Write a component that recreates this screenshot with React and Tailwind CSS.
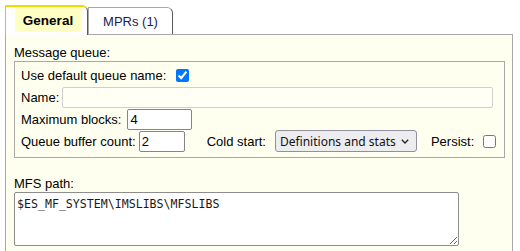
export default function App() {
  return (
    <div className="w-[520px] h-[251px] bg-white overflow-hidden text-[13px] text-black font-['Liberation_Sans',Arial,sans-serif]">
      {/* Tabs */}
      <div className="flex items-end h-[34px] pl-[5px]">
        <div className="relative z-10 -mb-px h-[30px] w-[83px] bg-white border-l border-l-[#b4b4b4] border-t-2 border-t-[#f0da00] border-r border-r-[#5a5a5a] rounded-tr-[6px] pt-px pl-[9px]">
          <div className="w-[66px] h-[24px] bg-[#ffffc4] flex items-center justify-center font-bold text-[13.5px] leading-[15px]">
            General
          </div>
        </div>
        <div className="h-[27px] w-[85px] bg-white border-l border-t border-l-[#a8a8a8] border-t-[#a8a8a8] border-r border-r-[#5a5a5a] rounded-tr-[6px] flex items-center justify-center text-[#1c1c50] leading-[15px]">
          MPRs (1)
        </div>
      </div>

      {/* Panel */}
      <div className="ml-[5px] w-[508px] h-[230px] border border-[#a8a8a8] bg-[#fffff0] pl-[8px] pt-[10px]">
        <div className="leading-[15px]">Message queue:</div>
        <div className="mt-[1px] w-[491px] border border-[#a8a8a8] pl-[6px] pt-[2px] pb-[5px]">
          <div className="h-[22px] flex items-center leading-[15px]">
            <span>Use default queue name:</span>
            <input
              type="checkbox"
              defaultChecked
              className="ml-[10px] m-0 w-[13px] h-[13px] accent-[#0075ff]"
            />
          </div>
          <div className="h-[22px] flex items-center leading-[15px]">
            <span>Name:</span>
            <input
              type="text"
              readOnly
              defaultValue=""
              className="ml-[3px] w-[431px] h-[21px] border border-[#cfcfcf] rounded-[2px] bg-[#fffff6] px-[2px] text-[13px]"
            />
          </div>
          <div className="h-[22px] flex items-center leading-[15px]">
            <span>Maximum blocks:</span>
            <input
              type="text"
              readOnly
              defaultValue="4"
              className="ml-[6px] w-[65px] h-[21px] border border-[#858585] rounded-[2px] bg-white px-[2px] text-[13px]"
            />
          </div>
          <div className="h-[22px] flex items-center leading-[15px]">
            <span>Queue buffer count:</span>
            <input
              type="text"
              readOnly
              defaultValue="2"
              className="ml-[3px] w-[46px] h-[21px] border border-[#858585] rounded-[2px] bg-white px-[2px] text-[13px]"
            />
            <span className="ml-[22px]">Cold start:</span>
            <div className="ml-[9px] w-[142px] h-[22px] border border-[#8f8f9d] rounded-[3px] bg-[#ededf0] flex items-center justify-between pl-[4px] pr-[7px] font-['Noto_Sans',sans-serif] text-[12px] text-[#111]">
              <span>Definitions and stats</span>
              <svg width="8" height="5" viewBox="0 0 8 5" className="shrink-0">
                <path d="M0.8 0.8 L4 4 L7.2 0.8" fill="none" stroke="#222" strokeWidth="1.3" />
              </svg>
            </div>
            <span className="ml-[14px]">Persist:</span>
            <input
              type="checkbox"
              className="ml-[9px] m-0 w-[13px] h-[13px]"
            />
          </div>
        </div>

        <div className="mt-[18px] leading-[15px]">MFS path:</div>
        <textarea
          readOnly
          defaultValue={"$ES_MF_SYSTEM\\IMSLIBS\\MFSLIBS"}
          className="block mt-[1px] w-[445px] h-[54px] border border-[#8d8d8d] rounded-[2px] bg-white px-[2px] pt-[4px] resize font-['DejaVu_Sans_Mono',monospace] text-[11.6px] leading-[14px] text-[#1a1a1a]"
        />
      </div>
    </div>
  );
}
